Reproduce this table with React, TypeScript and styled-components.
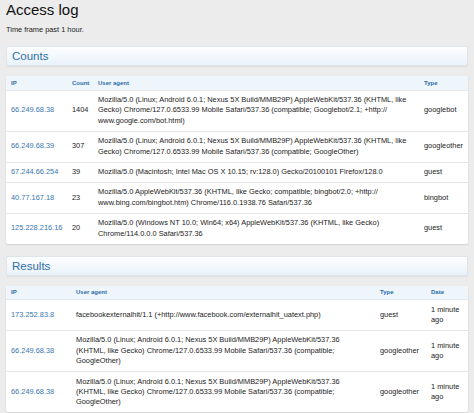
import React from "react";
import styled, { createGlobalStyle } from "styled-components";

const GlobalStyle = createGlobalStyle`
  html, body {
    margin: 0;
    padding: 0;
    background: #ececec;
    font-family: "Liberation Sans", Helvetica, Arial, sans-serif;
    color: #222;
  }
`;

const Page = styled.div`
  padding: 0 6px 20px;
`;

const Title = styled.h1`
  margin: 0;
  padding-top: 1px;
  font-size: 15px;
  line-height: 18px;
  font-weight: normal;
  color: #111;
`;

const Subtitle = styled.p`
  margin: 6px 0 0;
  font-size: 7.4px;
  line-height: 10px;
`;

const Section = styled.section<{ $top: number }>`
  margin-top: ${(p) => p.$top}px;
`;

const PanelHeader = styled.div`
  height: 20px;
  box-sizing: border-box;
  display: flex;
  align-items: center;
  padding: 0 5px;
  border: 1px solid #dde4ea;
  border-radius: 2px;
  background: linear-gradient(#fdfeff, #e9f2fa);
  box-shadow: 0 1px 1px rgba(0, 0, 0, 0.06);
`;

const PanelTitle = styled.h2`
  margin: 0;
  font-size: 11.5px;
  font-weight: normal;
  color: #2f6ea8;
`;

const Card = styled.div`
  margin-top: 10px;
  background: #fff;
  border-radius: 2px;
  box-shadow: 0 1px 2px rgba(0, 0, 0, 0.12);
  overflow: hidden;
`;

const Table = styled.table`
  width: 100%;
  border-collapse: collapse;
  table-layout: fixed;
`;

const Th = styled.th<{ $w: number }>`
  width: ${(p) => p.$w}px;
  height: 14px;
  box-sizing: border-box;
  padding: 0 5px;
  background: #eef6fc;
  color: #2b6ca8;
  font-size: 6px;
  font-weight: bold;
  text-align: left;
  border-bottom: 1px solid #e3e8ec;
`;

const Td = styled.td`
  padding: 4.5px 5px;
  font-size: 7.4px;
  line-height: 10.4px;
  vertical-align: middle;
  border-top: 1px solid #e6e6e6;
  color: #222;
`;

const IpLink = styled.a`
  color: #3777b0;
  text-decoration: none;
`;

type CountRow = { ip: string; count: number; ua: string; type: string };
type ResultRow = { ip: string; ua: string; type: string; date: string };

const counts: CountRow[] = [
  {
    ip: "66.249.68.38",
    count: 1404,
    ua: "Mozilla/5.0 (Linux; Android 6.0.1; Nexus 5X Build/MMB29P) AppleWebKit/537.36 (KHTML, like Gecko) Chrome/127.0.6533.99 Mobile Safari/537.36 (compatible; Googlebot/2.1; +http://www.google.com/bot.html)",
    type: "googlebot",
  },
  {
    ip: "66.249.68.39",
    count: 307,
    ua: "Mozilla/5.0 (Linux; Android 6.0.1; Nexus 5X Build/MMB29P) AppleWebKit/537.36 (KHTML, like Gecko) Chrome/127.0.6533.99 Mobile Safari/537.36 (compatible; GoogleOther)",
    type: "googleother",
  },
  {
    ip: "67.244.66.254",
    count: 39,
    ua: "Mozilla/5.0 (Macintosh; Intel Mac OS X 10.15; rv:128.0) Gecko/20100101 Firefox/128.0",
    type: "guest",
  },
  {
    ip: "40.77.167.18",
    count: 23,
    ua: "Mozilla/5.0 AppleWebKit/537.36 (KHTML, like Gecko; compatible; bingbot/2.0; +http://www.bing.com/bingbot.htm) Chrome/116.0.1938.76 Safari/537.36",
    type: "bingbot",
  },
  {
    ip: "125.228.216.16",
    count: 20,
    ua: "Mozilla/5.0 (Windows NT 10.0; Win64; x64) AppleWebKit/537.36 (KHTML, like Gecko) Chrome/114.0.0.0 Safari/537.36",
    type: "guest",
  },
];

const googleOther =
  "Mozilla/5.0 (Linux; Android 6.0.1; Nexus 5X Build/MMB29P) AppleWebKit/537.36 (KHTML, like Gecko) Chrome/127.0.6533.99 Mobile Safari/537.36 (compatible; GoogleOther)";

const results: ResultRow[] = [
  {
    ip: "173.252.83.8",
    ua: "facebookexternalhit/1.1 (+http://www.facebook.com/externalhit_uatext.php)",
    type: "guest",
    date: "1 minute ago",
  },
  { ip: "66.249.68.38", ua: googleOther, type: "googleother", date: "1 minute ago" },
  { ip: "66.249.68.38", ua: googleOther, type: "googleother", date: "1 minute ago" },
];

/* allow a line break after "://" as the reference browser does */
function UserAgent({ text }: { text: string }) {
  const parts = text.split("://");
  return (
    <>
      {parts.map((p, i) => (
        <React.Fragment key={i}>
          {p}
          {i < parts.length - 1 && (
            <>
              {"://"}
              <wbr />
            </>
          )}
        </React.Fragment>
      ))}
    </>
  );
}

export default function App() {
  return (
    <>
      <GlobalStyle />
      <Page>
        <Title>Access log</Title>
        <Subtitle>Time frame past 1 hour.</Subtitle>

        <Section $top={11}>
          <PanelHeader>
            <PanelTitle>Counts</PanelTitle>
          </PanelHeader>
          <Card>
            <Table>
              <thead>
                <tr>
                  <Th $w={61}>IP</Th>
                  <Th $w={26}>Count</Th>
                  <Th $w={326}>User agent</Th>
                  <Th $w={49}>Type</Th>
                </tr>
              </thead>
              <tbody>
                {counts.map((r) => (
                  <tr key={r.ip}>
                    <Td>
                      <IpLink href="#">{r.ip}</IpLink>
                    </Td>
                    <Td>{r.count}</Td>
                    <Td>
                      <UserAgent text={r.ua} />
                    </Td>
                    <Td>{r.type}</Td>
                  </tr>
                ))}
              </tbody>
            </Table>
          </Card>
        </Section>

        <Section $top={12}>
          <PanelHeader>
            <PanelTitle>Results</PanelTitle>
          </PanelHeader>
          <Card>
            <Table>
              <thead>
                <tr>
                  <Th $w={65}>IP</Th>
                  <Th $w={304}>User agent</Th>
                  <Th $w={51}>Type</Th>
                  <Th $w={42}>Date</Th>
                </tr>
              </thead>
              <tbody>
                {results.map((r, i) => (
                  <tr key={i}>
                    <Td>
                      <IpLink href="#">{r.ip}</IpLink>
                    </Td>
                    <Td>
                      <UserAgent text={r.ua} />
                    </Td>
                    <Td>{r.type}</Td>
                    <Td>{r.date}</Td>
                  </tr>
                ))}
              </tbody>
            </Table>
          </Card>
        </Section>
      </Page>
    </>
  );
}
